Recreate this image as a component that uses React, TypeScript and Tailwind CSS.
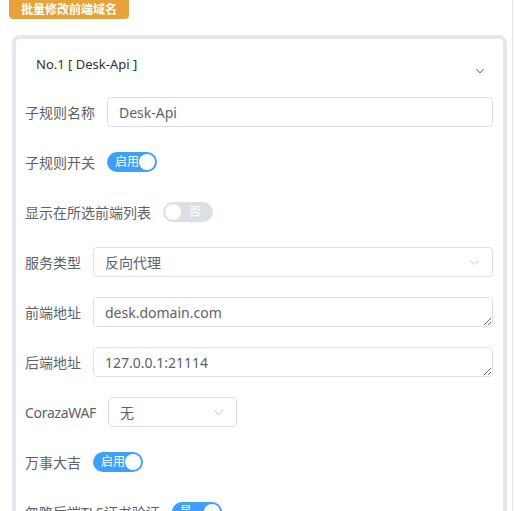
import React from "react";

const FONT = { fontFamily: '"Noto Sans", "Noto Sans CJK SC", sans-serif' };

// ── Small chevron used by the collapse header and the selects ─────────────────
function Chevron({ className }: { className?: string }) {
  return (
    <svg viewBox="0 0 12 8" className={className} fill="none" stroke="currentColor" strokeWidth="1.1">
      <path d="M1 1.5l5 5 5-5" />
    </svg>
  );
}

// ── Element-style switch with inline text ─────────────────────────────────────
function Switch({ on, text }: { on: boolean; text: string }) {
  return (
    <div
      className={
        on
          ? "relative flex h-5 w-[50px] shrink-0 items-center rounded-full bg-[#409eff] pl-[8px]"
          : "relative flex h-5 w-[50px] shrink-0 items-center justify-end rounded-full bg-[#dcdfe6] pr-[12px]"
      }
    >
      <span className="text-[12px] leading-none text-white">{text}</span>
      <span
        className={
          on
            ? "absolute right-[2px] top-[2px] h-4 w-4 rounded-full bg-white"
            : "absolute left-[2px] top-[2px] h-4 w-4 rounded-full bg-white"
        }
      />
    </div>
  );
}

function Row({ label, children, tight }: { label: string; children: React.ReactNode; tight?: boolean }) {
  return (
    <div className="flex h-[30px] items-center gap-3">
      <span
        className={
          tight
            ? "shrink-0 whitespace-nowrap text-[14px] tracking-[-0.3px] text-[#606266]"
            : "shrink-0 whitespace-nowrap text-[14px] text-[#606266]"
        }
      >
        {label}
      </span>
      {children}
    </div>
  );
}

function TextInput({ value }: { value: string }) {
  return (
    <div className="flex h-[30px] flex-1 items-center rounded-[4px] border border-[#dcdfe6] bg-white px-[11px] text-[14px] text-[#606266]">
      {value}
    </div>
  );
}

function TextArea({ value }: { value: string }) {
  return (
    <textarea
      readOnly
      rows={1}
      defaultValue={value}
      style={FONT}
      className="block h-[30px] flex-1 rounded-[4px] border border-[#dcdfe6] bg-white px-[11px] py-[5px] text-[14px] leading-5 text-[#606266] outline-none"
    />
  );
}

function Select({ value, className }: { value: string; className: string }) {
  return (
    <div
      className={
        "flex h-[30px] items-center justify-between rounded-[4px] border border-[#dcdfe6] bg-white pl-[11px] pr-[12px] text-[14px] text-[#606266] " +
        className
      }
    >
      <span>{value}</span>
      <Chevron className="h-[7px] w-[11px] text-[#c0c4cc]" />
    </div>
  );
}

export default function App() {
  return (
    <div style={FONT} className="min-h-[511px] w-[513px] border-r border-[#e4e7ed] bg-white">
      {/* batch rename button, scrolled so only its lower part shows */}
      <div className="ml-[9px] flex h-[19px] w-[120px] items-center justify-center rounded-b-[4px] bg-[#e6a23c] text-[12px] font-bold text-white">
        批量修改前端域名
      </div>

      {/* rule card */}
      <div className="ml-[12px] mt-4 w-[495px] rounded-[8px] border-4 border-[#e4e7ed] pb-6 pl-[9px] pr-[10px]">
        <div className="flex h-[58px] justify-between">
          <span className="pl-[11px] pt-[16px] text-[13px] leading-[18px] text-[#303133]">No.1 [ Desk-Api ]</span>
          <Chevron className="mr-[8px] mt-[29px] h-[6px] w-[10px] text-[#303133]" />
        </div>

        <div className="flex flex-col gap-5">
          <Row label="子规则名称">
            <TextInput value="Desk-Api" />
          </Row>
          <Row label="子规则开关">
            <Switch on text="启用" />
          </Row>
          <Row label="显示在所选前端列表">
            <Switch on={false} text="否" />
          </Row>
          <Row label="服务类型">
            <Select value="反向代理" className="flex-1" />
          </Row>
          <Row label="前端地址">
            <TextArea value="desk.domain.com" />
          </Row>
          <Row label="后端地址">
            <TextArea value="127.0.0.1:21114" />
          </Row>
          <Row label="CorazaWAF" tight>
            <Select value="无" className="w-[129px]" />
          </Row>
          <Row label="万事大吉">
            <Switch on text="启用" />
          </Row>
          <Row label="忽略后端TLS证书验证">
            <Switch on text="是" />
          </Row>
        </div>
      </div>
    </div>
  );
}
